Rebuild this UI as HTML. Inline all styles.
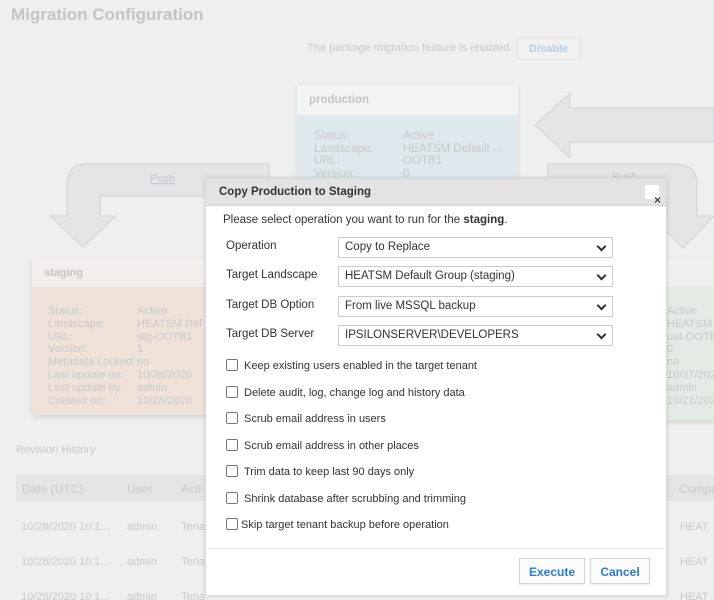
<!DOCTYPE html>
<html style="height:600px;overflow:hidden"><head><meta charset="utf-8"><style>
*{box-sizing:border-box}
body{margin:0;width:714px;height:600px;overflow:hidden;background:#efefef;font-family:"Liberation Sans",Arial,sans-serif;position:relative}
.a{position:absolute}
.f{color:#c9c9c9;font-size:12px}
.dlg{position:absolute;left:205px;top:178px;width:462px;height:418px;background:#fff;border:1px solid #dcdcdc;box-shadow:0 0 4px rgba(0,0,0,.15)}
.hd{height:27px;background:#e3e3e3;border-bottom:1px solid #d5d5d5;font-size:11.5px;font-weight:bold;color:#333;padding:7px 0 0 13px}
.lbl{position:absolute;left:20px;font-size:11.5px;color:#333}
.sel{position:absolute;left:132px;width:275px;height:21px;border:1px solid #ccc;background:#fff;font-size:11.5px;color:#333;padding:3px 0 0 6px}
.sel:after{content:"";position:absolute;right:7px;top:5px;width:5px;height:5px;border-right:2px solid #333;border-bottom:2px solid #333;transform:rotate(45deg)}
.cb{position:absolute;left:20px;font-size:11px;color:#333}
.cb i{display:inline-block;width:12px;height:12px;border:1px solid #777;border-radius:2px;vertical-align:-2px;margin-right:6px}
.btn{position:absolute;height:26px;border:1px solid #d5d5d5;background:#fbfbfb;color:#2b7bd3;font-weight:bold;font-size:12px;text-align:center;padding-top:6px;box-shadow:0 1px 2px rgba(0,0,0,.1)}
</style></head><body>
<div class="a" style="left:11px;top:5px;font-size:17px;font-weight:bold;color:#c4c4c4">Migration Configuration</div>
<div class="a f" style="left:307px;top:42px;font-size:11px">The package migration feature is enabled.</div>
<div class="a" style="left:517px;top:38px;width:63px;height:22px;border:1px solid #e2e2e2;background:#f1f1f1;color:#b9cce4;font-size:11px;font-weight:bold;text-align:center;padding-top:4px">Disable</div>
<svg class="a" style="left:0;top:0" width="714" height="600">
<g fill="#e3e5e7" stroke="#cfd1d3" stroke-width="1">
<polygon points="714,108 570,108 570,93 535,125 570,158 570,142 714,142"/>
<path d="M269,164 H86 Q67,164 67,185 V216 H50 L83,247 L116,216 H100 V196 H269 Z"/>
<path d="M548,164 H675 Q697,164 697,185 V216 H714 L683,248 L651,216 H667 V196 H548 Z"/>
</g>
<text x="150" y="182" fill="#c5c9cc" font-size="11" text-decoration="underline" font-family="Liberation Sans">Push</text>
<text x="612" y="180" fill="#c5c9cc" font-size="11" font-family="Liberation Sans">Push</text>
</svg>
<div class="a" style="left:297px;top:85px;width:221px;height:100px;background:#dfe8ed;box-shadow:0 1px 4px rgba(0,0,0,.1)">
<div style="height:30px;background:#f3f4f4;font-size:11.5px;color:#c4c4c4;font-weight:bold;padding:9px 0 0 12px">production</div>
<div class="f" style="position:absolute;left:17px;top:45px;line-height:12.5px;font-size:11.5px">Status:<br>Landscape:<br>URL:<br>Version:</div>
<div class="f" style="position:absolute;left:106px;top:45px;line-height:12.5px;font-size:11.5px">Active<br>HEATSM Default ...<br>OOTB1<br>0</div>
</div>
<div class="a" style="left:32px;top:258px;width:180px;height:157px;background:#f0e2d9;box-shadow:0 2px 5px rgba(0,0,0,.12)">
<div style="height:29px;background:#f2eeeb;font-size:11px;color:#c4c4c4;font-weight:bold;padding:9px 0 0 12px">staging</div>
<div class="f" style="position:absolute;left:16px;top:47px;line-height:12.8px;font-size:11px">Status:<br>Landscape:<br>URL:<br>Version:<br>Metadata Locked:<br>Last update on:<br>Last update by:<br>Created on:</div>
<div class="f" style="position:absolute;left:105px;top:47px;line-height:12.8px;font-size:11px">Active<br>HEATSM Def<br>stg-OOTB1<br>1<br>no<br>10/28/2020<br>admin<br>10/28/2020</div>
</div>
<div class="a" style="left:660px;top:258px;width:60px;height:162px;background:#e4ebe4;box-shadow:0 2px 5px rgba(0,0,0,.12)">
<div style="height:29px;background:#eef0ee"></div>
<div class="f" style="position:absolute;left:7px;top:47px;line-height:12.8px;font-size:11px;white-space:nowrap">Active<br>HEATSM<br>uat-OOTB<br>0<br>no<br>10/27/202<br>admin<br>10/21/202</div>
</div>
<div class="a f" style="left:16px;top:444px;font-size:11px">Revision History</div>
<div class="a" style="left:16px;top:475px;width:698px;height:26px;background:#e5e5e5"></div>
<div class="a f" style="left:22px;top:482px;font-size:12px">Date (UTC)</div>
<div class="a f" style="left:127px;top:482px;font-size:12px">User</div>
<div class="a f" style="left:181px;top:482px;font-size:12px">Acti</div>
<div class="a f" style="left:679px;top:482px;font-size:12px">Compa</div>
<div class="a f" style="left:21px;top:510px;font-size:11px;line-height:35px">10/28/2020 10:1...<br>10/28/2020 10:1...<br>10/28/2020 10:1...</div>
<div class="a f" style="left:127px;top:510px;font-size:11px;line-height:35px">admin<br>admin<br>admin</div>
<div class="a f" style="left:181px;top:510px;font-size:11px;line-height:35px">Tena<br>Tena<br>Tena</div>
<div class="a f" style="left:680px;top:510px;font-size:11px;line-height:35px">HEAT<br>HEAT<br>HEAT</div>

<div class="dlg">
<div class="hd">Copy Production to Staging</div>
<div style="position:absolute;left:438px;top:5px;width:16px;height:16px;border:1px solid #e5e5e5;background:#fff"></div>
<div style="position:absolute;left:448px;top:14px;font-size:12px;font-weight:bold;color:#444">×</div>
<div style="position:absolute;left:17px;top:35px;font-size:11.5px;color:#333">Please select operation you want to run for the <b>staging</b>.</div>
<div class="lbl" style="top:61px">Operation</div><div class="sel" style="top:58px">Copy to Replace</div>
<div class="lbl" style="top:90px">Target Landscape</div><div class="sel" style="top:87px">HEATSM Default Group (staging)</div>
<div class="lbl" style="top:120px">Target DB Option</div><div class="sel" style="top:117px">From live MSSQL backup</div>
<div class="lbl" style="top:149px">Target DB Server</div><div class="sel" style="top:146px">IPSILONSERVER\DEVELOPERS</div>
<div class="cb" style="top:180px"><i></i>Keep existing users enabled in the target tenant</div>
<div class="cb" style="top:207px"><i></i>Delete audit, log, change log and history data</div>
<div class="cb" style="top:233px"><i></i>Scrub email address in users</div>
<div class="cb" style="top:260px"><i></i>Scrub email address in other places</div>
<div class="cb" style="top:286px"><i></i>Trim data to keep last 90 days only</div>
<div class="cb" style="top:313px"><i></i>Shrink database after scrubbing and trimming</div>
<div class="cb" style="top:339px"><i style="margin-right:3px"></i>Skip target tenant backup before operation</div>
<div style="position:absolute;left:2px;right:4px;top:369px;border-top:1px solid #e2e2e2"></div>
<div class="btn" style="left:313px;top:379px;width:66px">Execute</div>
<div class="btn" style="left:384px;top:379px;width:60px">Cancel</div>
</div>
</body></html>
